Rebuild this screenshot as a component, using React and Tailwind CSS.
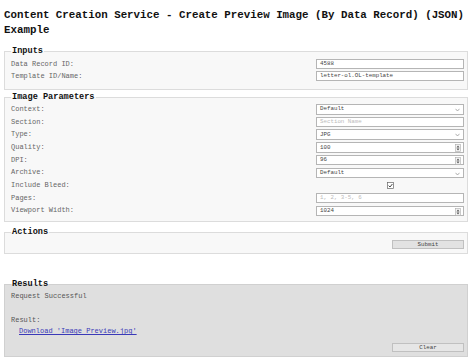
import React from "react";

const mono = { fontFamily: '"Liberation Mono", "DejaVu Sans Mono", monospace' };

const Chevron = () => (
  <svg width="5" height="4" viewBox="0 0 5 4" className="absolute right-[3px] top-[3px]">
    <polyline points="0.5,0.8 2.5,3 4.5,0.8" fill="none" stroke="#999" strokeWidth="0.8" />
  </svg>
);

const Spinner = () => (
  <svg width="6" height="8" viewBox="0 0 6 8" className="absolute right-[2px] top-[1px]">
    <rect x="0.5" y="0.5" width="5" height="7" fill="#f4f4f4" stroke="#aaa" strokeWidth="0.6" />
    <polygon points="3,1.5 4.5,3.4 1.5,3.4" fill="#555" />
    <polygon points="3,6.5 4.5,4.6 1.5,4.6" fill="#555" />
  </svg>
);

const Field = ({ value, placeholder, kind }) => (
  <div className="relative w-[148px] h-[10.5px] bg-white border border-[#b5b5b5] flex items-center pl-[3px] text-[5.8px] leading-none">
    {value ? <span className="text-[#444]">{value}</span> : <span className="text-[#bbb]">{placeholder}</span>}
    {kind === "select" && <Chevron />}
    {kind === "number" && <Spinner />}
  </div>
);

const Row = ({ label, h, children }) => (
  <div className={`flex items-center justify-between ${h}`}>
    <span className="text-[7px] text-[#666] leading-none">{label}</span>
    {children}
  </div>
);

const Legend = ({ children }) => (
  <legend className="text-[8.6px] font-bold leading-[10px] text-[#111] px-[1px]">{children}</legend>
);

export default function App() {
  const params = [
    ["Context:", { value: "Default", kind: "select" }],
    ["Section:", { placeholder: "Section Name" }],
    ["Type:", { value: "JPG", kind: "select" }],
    ["Quality:", { value: "100", kind: "number" }],
    ["DPI:", { value: "96", kind: "number" }],
    ["Archive:", { value: "Default", kind: "select" }],
    ["Include Bleed:", null],
    ["Pages:", { placeholder: "1, 2, 3-5, 6" }],
    ["Viewport Width:", { value: "1024", kind: "number" }],
  ];

  return (
    <div className="min-h-screen bg-white px-[4px] pt-[8px]" style={mono}>
      <h1 className="text-[10.8px] leading-[14.5px] font-bold text-[#111]">
        Content Creation Service - Create Preview Image (By Data Record) (JSON) Example
      </h1>

      <fieldset className="mt-[9px] w-[464px] border border-[#dcdcdc] bg-[#f8f8f8] pl-[6px] pr-[3px] pt-[2px] pb-[7px]">
        <Legend>Inputs</Legend>
        <Row label="Data Record ID:" h="h-[12px]">
          <Field value="4588" />
        </Row>
        <Row label="Template ID/Name:" h="h-[12px]">
          <Field value="letter-ol.OL-template" />
        </Row>
      </fieldset>

      <fieldset className="mt-[2px] w-[464px] border border-[#dcdcdc] bg-[#f8f8f8] pl-[6px] pr-[3px] pt-[1px] pb-[4px]">
        <Legend>Image Parameters</Legend>
        {params.map(([label, f]) => (
          <Row key={label} label={label} h="h-[12.7px]">
            {f ? (
              <Field {...f} />
            ) : (
              <div className="w-[148px] flex justify-center">
                <svg width="7" height="7" viewBox="0 0 7 7">
                  <rect x="0.5" y="0.5" width="6" height="6" fill="#fff" stroke="#666" strokeWidth="0.7" />
                  <polyline points="1.6,3.6 3,5 5.4,2" fill="none" stroke="#333" strokeWidth="0.9" />
                </svg>
              </div>
            )}
          </Row>
        ))}
      </fieldset>

      <fieldset className="mt-[5px] w-[464px] border border-[#dcdcdc] bg-[#f8f8f8] pl-[6px] pr-[3px] pt-[3px] pb-[4px]">
        <Legend>Actions</Legend>
        <div className="flex justify-end">
          <button className="w-[72px] h-[9px] bg-[#e2e2e2] border border-[#c0c0c0] text-[5.8px] leading-none text-[#444]">
            Submit
          </button>
        </div>
      </fieldset>

      <fieldset className="mt-[25px] w-[464px] border border-[#d0d0d0] bg-[#dfdfdf] pl-[6px] pr-[3px] pt-[2px] pb-[4px]">
        <Legend>Results</Legend>
        <div className="text-[7px] leading-[10px] text-[#555]">Request Successful</div>
        <div className="h-[14px]" />
        <div className="text-[7px] leading-[10px] text-[#555]">Result:</div>
        <div className="pl-[8px] text-[7px] leading-[13px]">
          <a href="#" className="text-[#3a3ab8] underline">
            Download 'Image Preview.jpg'
          </a>
        </div>
        <div className="flex justify-end mt-[5px]">
          <button className="w-[72px] h-[9px] bg-[#e6e6e6] border border-[#c0c0c0] text-[5.8px] leading-none text-[#444]">
            Clear
          </button>
        </div>
      </fieldset>
    </div>
  );
}
